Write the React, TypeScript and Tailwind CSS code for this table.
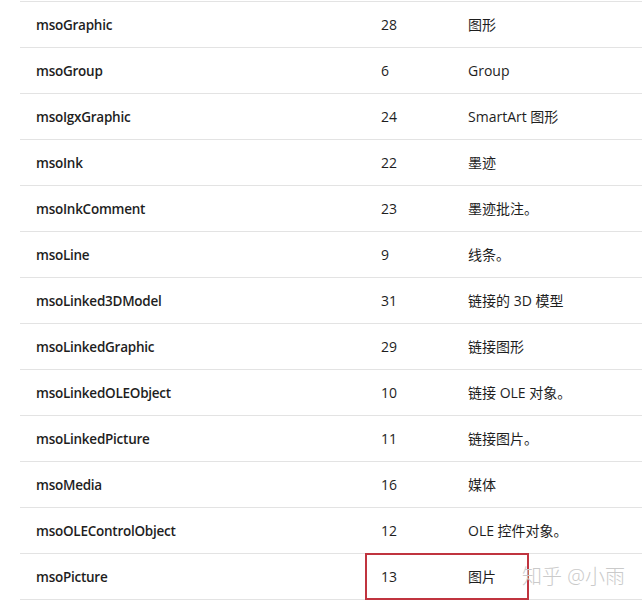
import React from "react";

const rows: [string, string, string][] = [
  ["msoGraphic", "28", "图形"],
  ["msoGroup", "6", "Group"],
  ["msoIgxGraphic", "24", "SmartArt 图形"],
  ["msoInk", "22", "墨迹"],
  ["msoInkComment", "23", "墨迹批注。"],
  ["msoLine", "9", "线条。"],
  ["msoLinked3DModel", "31", "链接的 3D 模型"],
  ["msoLinkedGraphic", "29", "链接图形"],
  ["msoLinkedOLEObject", "10", "链接 OLE 对象。"],
  ["msoLinkedPicture", "11", "链接图片。"],
  ["msoMedia", "16", "媒体"],
  ["msoOLEControlObject", "12", "OLE 控件对象。"],
  ["msoPicture", "13", "图片"],
];

export default function App() {
  return (
    <div
      className="w-[642px] h-[603px] bg-white overflow-hidden text-[14px] text-[#1e1e1e]"
      style={{ fontFamily: '"Segoe UI", "Open Sans", "Noto Sans CJK SC", sans-serif' }}
    >
      <div className="ml-[20px] mt-[1px] border-b border-[#e3e3e3]">
        {rows.map(([name, val, desc], i) => (
          <div
            key={name}
            className="relative grid grid-cols-[345px_87px_1fr] h-[46px] border-t border-[#e3e3e3] items-center"
          >
            <div className="pl-4 pt-[2px] font-semibold text-[13.5px] tracking-[-0.25px]">{name}</div>
            <div className="pl-4">{val}</div>
            <div className="pl-4">{desc}</div>
            {i === rows.length - 1 && (
              <>
                <div className="absolute left-[345px] top-[-1px] w-[164px] h-[47px] border-2 border-[#c0343f]" />
                <div className="absolute left-[502px] top-[8px] text-[20px] font-light text-[#cacaca] whitespace-nowrap">
                  知乎 @小雨
                </div>
              </>
            )}
          </div>
        ))}
      </div>
    </div>
  );
}
